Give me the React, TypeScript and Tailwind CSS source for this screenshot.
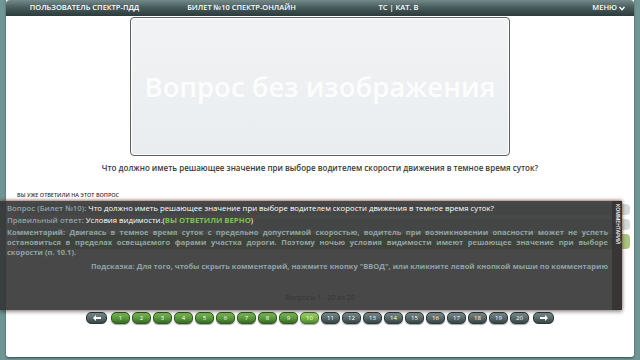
import React from "react";

const font = { fontFamily: '"Open Sans", "Noto Sans", sans-serif' };

function Arrow({ dir }: { dir: "l" | "r" }) {
  return (
    <svg width="8" height="6" viewBox="0 0 8 6" className={dir === "r" ? "rotate-180" : ""}>
      <path d="M0 3 L3 0 L3 2 L8 2 L8 4 L3 4 L3 6 Z" fill="white" />
    </svg>
  );
}

function PageBtn({ n }: { n: number }) {
  const green = n < 10;
  const sel = n === 10;
  const cls = sel
    ? "bg-gradient-to-b from-[#a6d477] via-[#7ab64c] to-[#4e8a2c] border-[#3f6f25]"
    : green
    ? "bg-gradient-to-b from-[#7fb85c] via-[#5a9a3c] to-[#356d22] border-[#2f5a1f]"
    : "bg-gradient-to-b from-[#7d8d8d] via-[#596a6a] to-[#364545] border-[#2c3838]";
  return (
    <div
      className={`w-[19px] h-[12px] rounded-[5px] border ${cls} flex items-center justify-center text-[6px] leading-none text-white shadow-[0_1px_1px_rgba(0,0,0,0.35)]`}
    >
      {n}
    </div>
  );
}

export default function App() {
  const nums = Array.from({ length: 20 }, (_, i) => i + 1);
  return (
    <div className="w-[640px] h-[360px] bg-[#6f9595] relative overflow-hidden" style={font}>
      <div className="mx-[6px] h-[357px] bg-white rounded-b-[3px] shadow-[0_1px_2px_rgba(0,0,0,0.5)] flex flex-col">
        {/* header */}
        <div className="h-[16px] rounded-t-[4px] bg-gradient-to-b from-[#748a8a] via-[#46595a] to-[#2c3a3b] grid grid-cols-4 items-center text-white font-semibold text-[7.5px] uppercase">
          <div className="text-center">ПОЛЬЗОВАТЕЛЬ СПЕКТР-ПДД</div>
          <div className="text-center">БИЛЕТ №10 СПЕКТР-ОНЛАЙН</div>
          <div className="text-center">ТС | КАТ. В</div>
          <div className="flex items-center justify-end gap-[2px] pr-[9px]">
            <span>МЕНЮ</span>
            <svg width="6" height="5" viewBox="0 0 6 5">
              <path d="M0.5 1 L3 3.8 L5.5 1" stroke="white" strokeWidth="1.4" fill="none" />
            </svg>
          </div>
        </div>

        {/* image box */}
        <div className="mt-[1px] mx-auto w-[380px] h-[139px] rounded-[4px] border-[1.5px] border-[#5c5f60] bg-gradient-to-b from-[#f1f3f5] to-[#eaedef] shadow-[inset_0_0_0_1px_#ffffff] flex items-center justify-center">
          <span className="text-[#fcfdfd] text-[27.5px] font-semibold leading-none">
            Вопрос без изображения
          </span>
        </div>

        {/* question */}
        <div className="mt-[7px] h-[10px] leading-[10px] text-center text-[8px] font-semibold text-[#3a3a3a]">
          Что должно иметь решающее значение при выборе водителем скорости движения в темное время суток?
        </div>

        <div className="mt-[18px] ml-[11px] h-[8px] leading-[8px] text-[5.5px] font-semibold text-[#333]">
          ВЫ УЖЕ ОТВЕТИЛИ НА ЭТОТ ВОПРОС
        </div>

        {/* answers (under overlay) */}
        <div className="mt-[5px] ml-[11px] mr-[4px] flex flex-col gap-[4px]">
          <div className="h-[11px] rounded-[4px] bg-[#d4d9da]" />
          <div className="h-[11px] rounded-[4px] bg-[#d4d9da]" />
          <div className="h-[15px] rounded-[4px] bg-[#a9c57f]" />
        </div>

        <div className="mt-[45px] h-[8px] leading-[8px] text-center text-[7px] text-[#2a2a2a]">
          Вопросы 1 - 20 из 20
        </div>

        {/* pagination */}
        <div className="mt-[10px] flex justify-center gap-[2px]">
          <div className="w-[21px] h-[12px] rounded-[5px] border border-[#2c3838] bg-gradient-to-b from-[#7d8d8d] via-[#596a6a] to-[#364545] flex items-center justify-center mr-[2px]">
            <Arrow dir="l" />
          </div>
          {nums.map((n) => (
            <PageBtn key={n} n={n} />
          ))}
          <div className="w-[21px] h-[12px] rounded-[5px] border border-[#2c3838] bg-gradient-to-b from-[#7d8d8d] via-[#596a6a] to-[#364545] flex items-center justify-center ml-[2px]">
            <Arrow dir="r" />
          </div>
        </div>
      </div>

      {/* comment overlay */}
      <div className="absolute left-0 top-[201px] w-[622px] h-[109px] bg-[rgba(52,52,52,0.9)] shadow-[0_-1px_3px_rgba(120,70,50,0.7),0_2px_4px_rgba(0,0,0,0.4)] flex">
        <div className="flex-1 pl-[7px] pr-[4px] pt-[1px] text-[7.75px] leading-[12px]">
          <div>
            <span className="text-[#8ea3a6] font-semibold">Вопрос (Билет №10): </span>
            <span className="text-white">
              Что должно иметь решающее значение при выборе водителем скорости движения в темное время суток?
            </span>
          </div>
          <div>
            <span className="text-[#8ea3a6] font-semibold">Правильный ответ: </span>
            <span className="text-white">Условия видимости.(</span>
            <span className="text-[#7fc24a] font-bold">ВЫ ОТВЕТИЛИ ВЕРНО</span>
            <span className="text-white">)</span>
          </div>
          <div className="text-[#8ea3a6] font-bold text-[7.5px] leading-[10px] mt-[1px]">
            <div className="text-justify [text-align-last:justify]">
              Комментарий: Двигаясь в темное время суток с предельно допустимой скоростью, водитель при возникновении опасности может не успеть
            </div>
            <div className="text-justify [text-align-last:justify]">
              остановиться в пределах освещаемого фарами участка дороги. Поэтому ночью условия видимости имеют решающее значение при выборе
            </div>
            <div>скорости (п. 10.1).</div>
          </div>
          <div className="mt-[3px] text-right text-[#8ea3a6] font-bold text-[7.5px]">
            Подсказка: Для того, чтобы скрыть комментарий, нажмите кнопку "ВВОД", или кликните левой кнопкой мыши по комментарию
          </div>
        </div>
        <div className="w-[10px] bg-[#3a3535] flex justify-center pt-[3px]">
          <span className="text-white text-[5px] leading-none font-semibold [writing-mode:vertical-rl] h-[50px]">
            КОММЕНТАРИЙ
          </span>
        </div>
      </div>
    </div>
  );
}
